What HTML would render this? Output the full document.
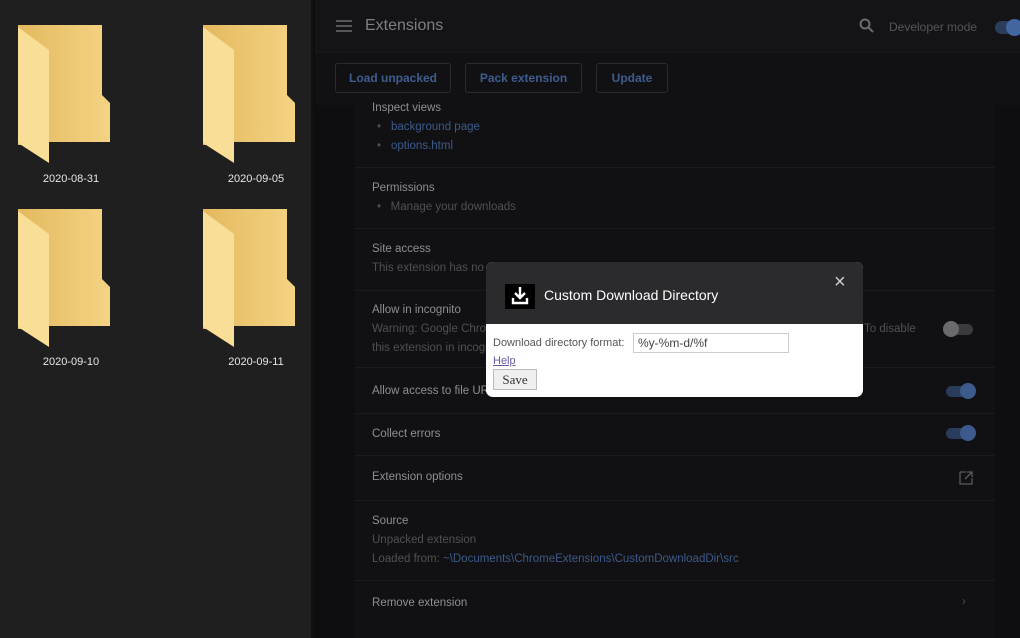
<!DOCTYPE html>
<html><head><style>
*{margin:0;padding:0;box-sizing:border-box}
body{width:1020px;height:638px;overflow:hidden;background:#0e0e10;font-family:"Liberation Sans",sans-serif;position:relative}
.left{position:absolute;left:0;top:0;width:313px;height:638px;background:#1f1f1f;border-right:2px solid #111}
.fl{position:absolute;width:100px;text-align:center;color:#e6e6e6;font-size:11px}
.t{position:absolute;font-size:11.5px;color:#8a8a8e;white-space:nowrap}
.h{color:#8f8f93}
.sub{color:#505054}
.lnk{color:#3d5a8a}
.sep{position:absolute;left:354px;width:641px;height:1px;background:#1b1b1e}
.btn{position:absolute;top:63px;height:30px;border:1px solid #2a2b2e;border-radius:3px;color:#3f5c8f;font-size:12px;font-weight:bold;line-height:28px;text-align:center}
.tog{position:absolute;width:28px;height:11px;border-radius:6px;background:#2a3c5c}
.tog::after{content:"";position:absolute;right:-2px;top:-3px;width:16px;height:16px;border-radius:50%;background:#3d5a8c}
</style></head><body>
<div class="left"></div>
<svg width="313" height="380" style="position:absolute;left:0;top:0">
<defs>
<linearGradient id="g" x1="0" x2="1"><stop offset="0" stop-color="#e3b95e"/><stop offset="1" stop-color="#f5d383"/></linearGradient>
<g id="f">
<path d="M0,0 H84 V70 L92,78 V117 H30 V120 H0 Z" fill="url(#g)"/>
<path d="M0,2 L31,25 V138 L0,118 Z" fill="#f9de97"/>
</g>
</defs>
<use href="#f" x="18" y="25"/><use href="#f" x="203" y="25"/>
<use href="#f" x="18" y="209"/><use href="#f" x="203" y="209"/>
</svg>
<div class="fl" style="left:21px;top:173px">2020-08-31</div>
<div class="fl" style="left:206px;top:173px">2020-09-05</div>
<div class="fl" style="left:21px;top:356px">2020-09-10</div>
<div class="fl" style="left:206px;top:356px">2020-09-11</div>

<div style="position:absolute;left:315px;top:0;width:705px;height:53px;background:#141416;border-bottom:1px solid #19191b"></div>
<div style="position:absolute;left:315px;top:53px;width:705px;height:52px;background:#111113"></div>
<div style="position:absolute;left:336px;top:20px;width:16px;height:2px;background:#55565a;box-shadow:0 5px 0 #55565a,0 10px 0 #55565a"></div>
<div class="t" style="left:365px;top:17px;font-size:16px;color:#7e7f83">Extensions</div>
<svg style="position:absolute;left:859px;top:18px" width="16" height="16"><circle cx="6" cy="6" r="4.5" fill="none" stroke="#6a6b6f" stroke-width="2"/><path d="M9.5 9.5 L14 14" stroke="#6a6b6f" stroke-width="2"/></svg>
<div class="t" style="left:889px;top:20px;font-size:12px;color:#55565a">Developer mode</div>
<div style="position:absolute;left:995px;top:21px;width:30px;height:13px;border-radius:7px;background:#2c3d5c"></div>
<div style="position:absolute;left:1006px;top:19px;width:17px;height:17px;border-radius:50%;background:#4466a0"></div>
<div class="btn" style="left:335px;width:116px">Load unpacked</div>
<div class="btn" style="left:465px;width:117px">Pack extension</div>
<div class="btn" style="left:596px;width:72px">Update</div>

<div style="position:absolute;left:354px;top:105px;width:641px;height:533px;background:#111113"></div>
<div class="t h" style="left:372px;top:102px">Inspect views</div>
<div class="t sub" style="left:377px;top:121px">•</div><div class="t lnk" style="left:391px;top:121px">background page</div>
<div class="t sub" style="left:377px;top:140px">•</div><div class="t lnk" style="left:391px;top:140px">options.html</div>
<div class="sep" style="top:167px"></div>
<div class="t h" style="left:372px;top:182px">Permissions</div>
<div class="t sub" style="left:377px;top:201px">•&nbsp;&nbsp; Manage your downloads</div>
<div class="sep" style="top:228px"></div>
<div class="t h" style="left:372px;top:243px">Site access</div>
<div class="t sub" style="left:372px;top:262px">This extension has no</div>
<div class="sep" style="top:290px"></div>
<div class="t h" style="left:372px;top:304px">Allow in incognito</div>
<div class="t sub" style="left:372px;top:323px">Warning: Google Chrome</div>
<div class="t sub" style="left:864px;top:323px">To disable</div>
<div class="t sub" style="left:372px;top:342px">this extension in incognito</div>
<div style="position:absolute;left:945px;top:324px;width:28px;height:11px;border-radius:6px;background:#3a3a3c"></div>
<div style="position:absolute;left:943px;top:321px;width:16px;height:16px;border-radius:50%;background:#6a6a6c"></div>
<div class="sep" style="top:367px"></div>
<div class="t h" style="left:372px;top:385px">Allow access to file URLs</div>
<div class="tog" style="left:946px;top:386px"></div>
<div class="sep" style="top:413px"></div>
<div class="t h" style="left:372px;top:428px">Collect errors</div>
<div class="tog" style="left:946px;top:428px"></div>
<div class="sep" style="top:455px"></div>
<div class="t h" style="left:372px;top:471px">Extension options</div>
<svg style="position:absolute;left:958px;top:470px" width="16" height="16"><path d="M2 2H8M2 2V14H14V8M9 2H14V7M14 2L7 9" fill="none" stroke="#5a5b5f" stroke-width="1.3"/></svg>
<div class="sep" style="top:500px"></div>
<div class="t h" style="left:372px;top:515px">Source</div>
<div class="t sub" style="left:372px;top:534px">Unpacked extension</div>
<div class="t sub" style="left:372px;top:553px">Loaded from: <span class="lnk">~\Documents\ChromeExtensions\CustomDownloadDir\src</span></div>
<div class="sep" style="top:580px"></div>
<div class="t h" style="left:372px;top:597px">Remove extension</div>
<div class="t sub" style="left:962px;top:596px">›</div>

<div style="position:absolute;left:486px;top:262px;width:377px;height:135px;border-radius:7px;overflow:hidden;background:#fff">
<div style="height:62px;background:#2b2b2d;position:relative">
<div style="position:absolute;left:19px;top:22px;width:30px;height:25px;background:#000"></div>
<svg style="position:absolute;left:25px;top:24px" width="18" height="20"><path d="M9 1V11M4 7L9 12L14 7M2 12V17H16V12" fill="none" stroke="#fff" stroke-width="2.4"/></svg>
<div style="position:absolute;left:58px;top:25px;color:#fff;font-size:14px">Custom Download Directory</div>
<div style="position:absolute;left:348px;top:9px;color:#ccc;font-size:20px">×</div>
</div>
<div style="position:absolute;left:7px;top:75px;font-size:11px;color:#555">Download directory format:</div>
<div style="position:absolute;left:147px;top:71px;width:156px;height:20px;border:1px solid #ccc;font-size:12px;color:#444;padding:2px 4px">%y-%m-d/%f</div>
<div style="position:absolute;left:7px;top:93px;font-size:11px;color:#6a5aa0;text-decoration:underline">Help</div>
<div style="position:absolute;left:7px;top:107px;width:44px;height:21px;border:1px solid #bbb;background:#efefef;font-family:'Liberation Serif',serif;font-size:13px;color:#333;text-align:center;line-height:19px">Save</div>
</div>
</body></html>
